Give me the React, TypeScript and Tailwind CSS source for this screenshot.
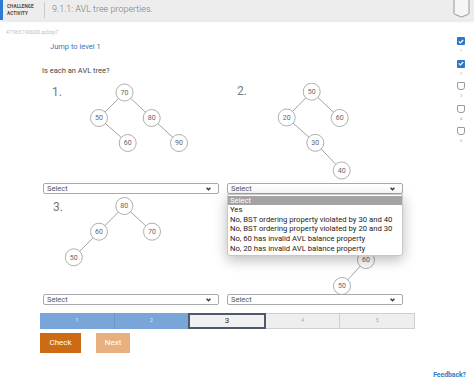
type TreeNode = { v: string; x: number; y: number }
type Tree = { label: string; lx: number; ly: number; nodes: TreeNode[]; edges: [number, number][] }

const trees: Tree[] = [
  {
    label: "1.",
    lx: 9,
    ly: 8.5,
    nodes: [
      { v: "70", x: 81.5, y: 9.5 },
      { v: "50", x: 56, y: 35 },
      { v: "80", x: 108.7, y: 35 },
      { v: "60", x: 84.7, y: 60 },
      { v: "90", x: 136, y: 60 },
    ],
    edges: [[0, 1], [0, 2], [1, 3], [2, 4]],
  },
  {
    label: "2.",
    lx: 10,
    ly: 8,
    nodes: [
      { v: "50", x: 84.7, y: 8.7 },
      { v: "20", x: 59.7, y: 34.5 },
      { v: "60", x: 112.7, y: 35 },
      { v: "30", x: 88.3, y: 59.8 },
      { v: "40", x: 114.7, y: 87.5 },
    ],
    edges: [[0, 1], [0, 2], [1, 3], [3, 4]],
  },
  {
    label: "3.",
    lx: 10,
    ly: 13,
    nodes: [
      { v: "80", x: 81.3, y: 12 },
      { v: "60", x: 56, y: 37.7 },
      { v: "70", x: 109, y: 37.7 },
      { v: "50", x: 30.8, y: 63.3 },
    ],
    edges: [[0, 1], [0, 2], [1, 3]],
  },
  {
    label: "4.",
    lx: 10,
    ly: 13,
    nodes: [
      { v: "40", x: 88, y: 12 },
      { v: "30", x: 62, y: 38 },
      { v: "70", x: 114, y: 38 },
      { v: "60", x: 139, y: 66 },
      { v: "50", x: 115, y: 92 },
    ],
    edges: [[0, 1], [0, 2], [2, 3], [3, 4]],
  },
]

const options = [
  "Select",
  "Yes",
  "No, BST ordering property violated by 30 and 40",
  "No, BST ordering property violated by 20 and 30",
  "No, 60 has invalid AVL balance property",
  "No, 20 has invalid AVL balance property",
]

function TreeDrawing({ tree }: { tree: Tree }) {
  return (
    <svg width="176" height="100" viewBox="0 0 176 100">
      <text x={tree.lx} y={tree.ly + 4} fontSize="12" fill="#777" fontFamily="Roboto, sans-serif">
        {tree.label}
      </text>
      {tree.edges.map(([a, b], i) => (
        <line
          key={i}
          x1={tree.nodes[a].x}
          y1={tree.nodes[a].y}
          x2={tree.nodes[b].x}
          y2={tree.nodes[b].y}
          stroke="#8a8a8a"
          strokeWidth="0.8"
        />
      ))}
      {tree.nodes.map((n, i) => (
        <g key={i}>
          <circle cx={n.x} cy={n.y} r="8.5" fill="#fff" stroke="#9a9a9a" strokeWidth="0.8" />
          <text
            x={n.x}
            y={n.y + 2.4}
            textAnchor="middle"
            fontSize="7"
            fill="#666"
            fontFamily="Roboto, sans-serif"
          >
            {n.v}
          </text>
        </g>
      ))}
    </svg>
  )
}

function FakeSelect({ open }: { open?: boolean }) {
  return (
    <div className="relative">
      <div className="h-[11px] border border-[#a9a9a9] rounded-[2px] bg-white flex items-center justify-between pl-[3px] pr-[7px]">
        <span className="text-[7.5px] leading-[9px] text-[#555]">Select</span>
        <svg width="5" height="4" viewBox="0 0 5 4">
          <path d="M0.6 0.8 L2.5 2.8 L4.4 0.8" fill="none" stroke="#333" strokeWidth="1.3" />
        </svg>
      </div>
      {open && (
        <div className="absolute left-0 top-full w-full bg-white border border-[#c8c8c8] rounded-b-[3px] shadow-[0_4px_14px_rgba(0,0,0,0.28)] z-10 pt-[1px] pb-[2px]">
          {options.map((o, i) => (
            <div
              key={o}
              className={
                i === 0
                  ? "h-[9px] leading-[9px] text-[7.7px] pl-[2px] bg-[#a3a3a3] text-white"
                  : "h-[9.7px] leading-[9.7px] text-[7.7px] pl-[2px] text-[#222]"
              }
            >
              {o}
            </div>
          ))}
        </div>
      )}
    </div>
  )
}

const levels = [
  { n: "1", done: true },
  { n: "2", done: true },
  { n: "3", done: false },
  { n: "4", done: false },
  { n: "5", done: false },
]

export default function App() {
  return (
    <div className="w-[474px] h-[381px] overflow-hidden bg-white font-['Roboto',sans-serif] relative">
      <header className="relative h-[20px] bg-[#ededed] shadow-[0_1px_3px_rgba(0,0,0,0.15)] flex items-center">
        <div className="h-full w-[3px] bg-[#2d7bd0]" />
        <div className="ml-[4px] w-[37px] text-[4.6px] leading-[7.5px] font-bold text-[#4a4a4a] tracking-[0.1px]">
          <div>CHALLENGE</div>
          <div>ACTIVITY</div>
        </div>
        <div className="w-px h-[16px] bg-[#c9c9c9]" />
        <div className="ml-[7px] text-[9px] text-[#7a7a7a] font-light">9.1.1: AVL tree properties.</div>
        <svg className="absolute right-[4px] top-0" width="17" height="18" viewBox="0 0 17 18">
          <path d="M1 0 V13 Q1 14 2 14.4 L8.5 17 L15 14.4 Q16 14 16 13 V0" fill="#f6f6f6" stroke="#8c8c8c" strokeWidth="0.9" />
        </svg>
      </header>

      <div className="flex">
        <main className="w-[450px]">
          <div className="mt-[10px] ml-[6px] text-[4.5px] leading-[5px] text-[#bdbdbd]">471965.1906000.qx3zqy7</div>
          <div className="mt-[7px] ml-[50px] text-[7.5px] leading-[10px] text-[#4c6fa6]">Jump to level 1</div>
          <div className="mt-[14px] ml-[42px] text-[7.5px] leading-[10px] text-[#444]">Is each an AVL tree?</div>

          <div className="mt-[7px] ml-[43px] grid grid-cols-[176px_176px] gap-x-[8px]">
            {trees.map((t, i) => (
              <div key={t.label}>
                <TreeDrawing tree={t} />
                <FakeSelect open={i === 1} />
              </div>
            ))}
          </div>

          <div className="mt-[8px] ml-[40px] w-[375px] h-[16px] flex text-[5px]">
            <div className="flex-1 bg-[#79a5d9] text-white/80 flex items-center justify-center border-r border-[#6b96cb]">1</div>
            <div className="flex-1 bg-[#79a5d9] text-white/80 flex items-center justify-center">2</div>
            <div className="flex-1 bg-[#f1f1f1] border-2 border-[#4d586c] text-[8px] text-[#333] flex items-center justify-center">3</div>
            <div className="flex-1 bg-[#eeeeee] border border-[#cfcfcf] border-l-0 text-[#aaa] flex items-center justify-center">4</div>
            <div className="flex-1 bg-[#eeeeee] border border-[#cfcfcf] border-l-0 text-[#aaa] flex items-center justify-center">5</div>
          </div>

          <div className="mt-[4px] ml-[40px] flex gap-[15px]">
            <button className="w-[41px] h-[20px] bg-[#cd6b15] text-white text-[8px]">Check</button>
            <button className="w-[34px] h-[20px] bg-[#e8b07f] text-white text-[8px]">Next</button>
          </div>
        </main>

        <aside className="pt-[17px] pl-[7px] flex flex-col">
          {levels.map((l) => (
            <div key={l.n} className="h-[22.5px] w-[8px] flex flex-col items-center">
              {l.done ? (
                <div className="w-[8px] h-[8px] bg-[#2b78c8] rounded-[1px] flex items-center justify-center">
                  <svg width="6" height="5" viewBox="0 0 6 5">
                    <path d="M0.8 2.4 L2.4 3.9 L5.2 1" fill="none" stroke="#fff" strokeWidth="1.2" />
                  </svg>
                </div>
              ) : (
                <div className="w-[8px] h-[8px] border border-[#9a9a9a] rounded-[1px] rounded-b-[3px] bg-white" />
              )}
              <div className="mt-[2px] text-[4px] leading-[7px] text-[#aaa]">{l.n}</div>
            </div>
          ))}
        </aside>
      </div>

      <div className="absolute right-[8px] bottom-[2px] text-[6.8px] leading-[8px] font-bold text-[#2f7bc6]">Feedback?</div>
    </div>
  )
}
